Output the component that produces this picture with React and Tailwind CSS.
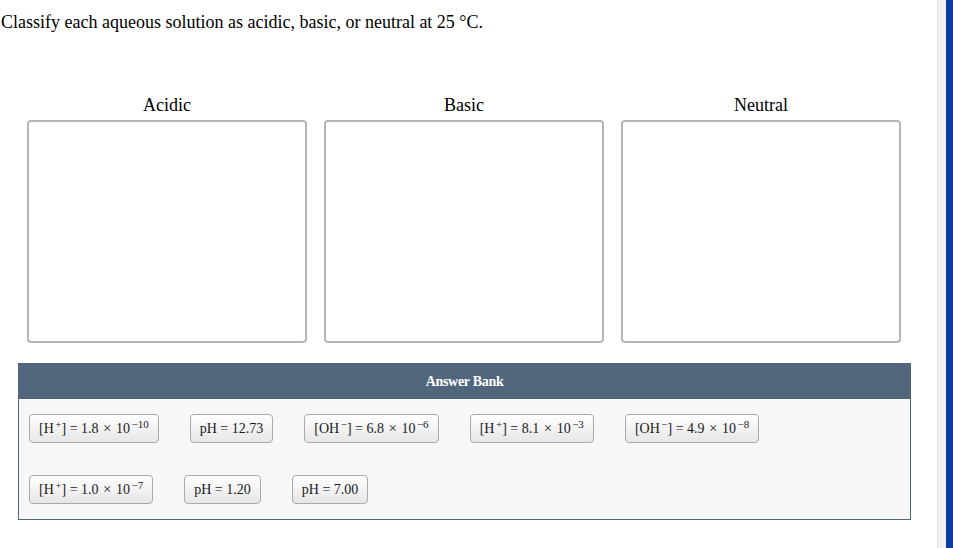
const font = { fontFamily: '"Liberation Serif", "Times New Roman", serif' };

const columns = ["Acidic", "Basic", "Neutral"];

const Sup = ({ children }) => <sup className="text-[11px] ml-[1.5px]">{children}</sup>;

const Times = () => <span className="mx-[1px] text-[15px]">×</span>;

const Chip = ({ children }) => (
    <div className="h-[29px] flex items-center px-[9px] rounded-[4px] border border-[#aaaaaa] bg-linear-to-b from-white to-[#e6e6e6] text-[14px] text-[#1a1a1a] leading-none whitespace-nowrap">
        <span>{children}</span>
    </div>
);

const rowOne = [
    <>[H<Sup>+</Sup>] = 1.8 <Times /> 10<Sup>−10</Sup></>,
    <>pH = 12.73</>,
    <>[OH<Sup>−</Sup>] = 6.8 <Times /> 10<Sup>−6</Sup></>,
    <>[H<Sup>+</Sup>] = 8.1 <Times /> 10<Sup>−3</Sup></>,
    <>[OH<Sup>−</Sup>] = 4.9 <Times /> 10<Sup>−8</Sup></>,
];

const rowTwo = [
    <>[H<Sup>+</Sup>] = 1.0 <Times /> 10<Sup>−7</Sup></>,
    <>pH = 1.20</>,
    <>pH = 7.00</>,
];

export default function App() {
    return (
        <div className="flex h-screen w-full bg-white" style={font}>
            <div className="flex-1 flex flex-col">
                {/* Question */}
                <p className="text-[18px] text-black pl-[1px] pt-[11px] leading-[22px]">
                    Classify each aqueous solution as acidic, basic, or neutral at 25 °C.
                </p>

                {/* Drop zones */}
                <div className="flex gap-[17px] ml-[27px] mt-[61px]">
                    {columns.map((col) => (
                        <div key={col} className="w-[280px] flex flex-col items-center">
                            <div className="text-[18px] text-black leading-[22px]">{col}</div>
                            <div className="mt-[4px] w-full h-[223px] border-2 border-[#b5b5b5] rounded-[4px] bg-white" />
                        </div>
                    ))}
                </div>

                {/* Answer Bank */}
                <div className="ml-[18px] mt-[20px] w-[893px] border border-[#51667d]">
                    <div className="h-[35px] bg-[#51667d] flex items-center justify-center text-white font-bold text-[14px] tracking-[-0.3px]">
                        Answer Bank
                    </div>
                    <div className="bg-[#f7f7f7] px-[10px] py-[15px] flex flex-col gap-[32px]">
                        <div className="flex gap-[31px]">
                            {rowOne.map((c, i) => (
                                <Chip key={i}>{c}</Chip>
                            ))}
                        </div>
                        <div className="flex gap-[31px]">
                            {rowTwo.map((c, i) => (
                                <Chip key={i}>{c}</Chip>
                            ))}
                        </div>
                    </div>
                </div>
            </div>

            {/* scrollbar edge */}
            <div className="w-[9px] bg-[#f0f0f0] border-l border-[#e2e2e2]" />
            <div className="w-[7px] bg-[#0c3aa8]" />
        </div>
    );
}
